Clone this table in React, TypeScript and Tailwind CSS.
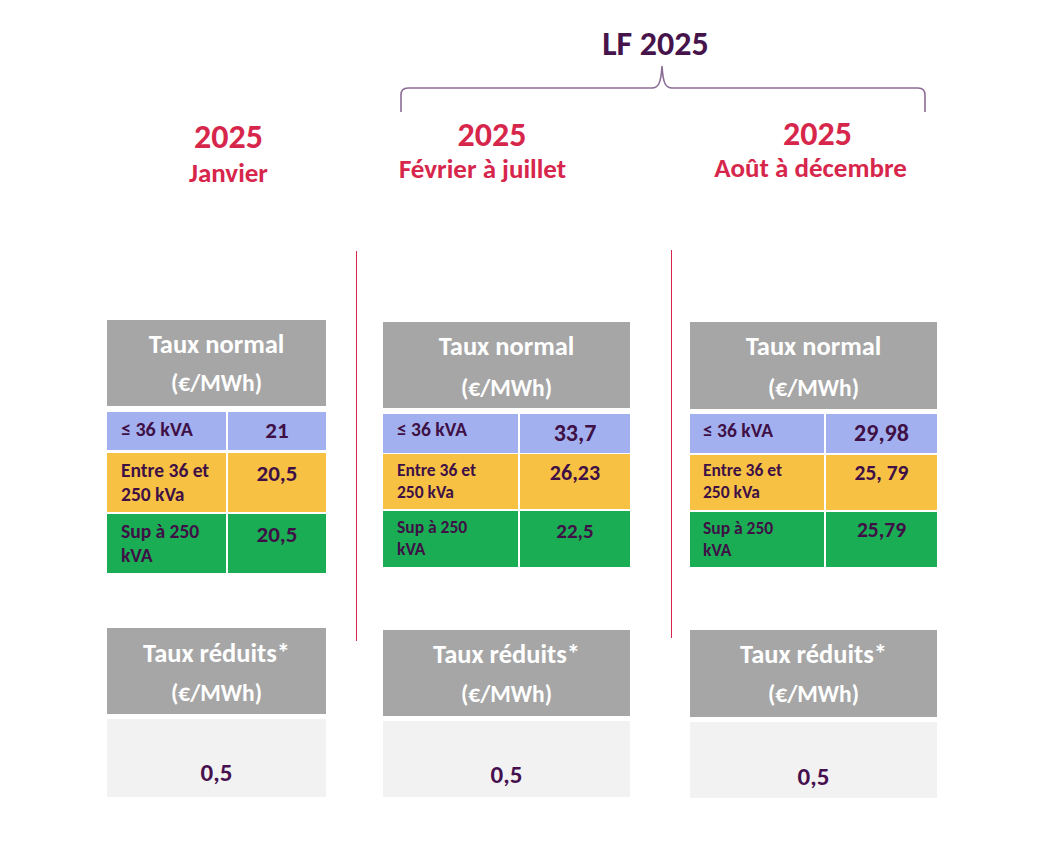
import React from "react";

const TXT = "text-[#3e1046]";

function GrayHead({ h, pt, l2, line1, line2 }: { h: string; pt: string; l2: string; line1: string; line2: string }) {
  return (
    <div className={`${h} ${pt} bg-[#a6a6a6] text-white font-bold text-center`}>
      <div className="text-[26.5px] leading-[38px]">{line1}</div>
      <div className={`text-[23.5px] ${l2}`}>{line2}</div>
    </div>
  );
}

export default function App() {
  return (
    <div className="w-[1040px] h-[866px] bg-white overflow-hidden font-[Carlito,Lato,sans-serif]">
      {/* LF 2025 + brace */}
      <div className="ml-[400px] w-[526px] pt-[27px]">
        <div className="text-[34px] leading-[34px] font-bold text-[#46144b] text-center pr-[15px]">LF 2025</div>
        <svg className="block mt-[3px]" width="526" height="50" viewBox="0 0 526 50" fill="none">
          <path
            d="M1,48 L1,31 Q1,24 8,24 L252,24 C258,24 261,20 262,2 C263,20 266,24 272,24 L518,24 Q525,24 525,31 L525,48"
            stroke="#8c6c95"
            strokeWidth="1.6"
          />
        </svg>
      </div>

      {/* Column headers */}
      <div className="h-[86px] flex items-start pl-[107px] text-[#d7264b] font-bold">
        <div className="w-[219px] text-center pl-[24px] mt-[5px]">
          <div className="text-[34px] leading-[36px]">2025</div>
          <div className="text-[27px] leading-[36px]">Janvier</div>
        </div>
        <div className="w-[57px]" />
        <div className="w-[247px] text-center mt-[3px]">
          <div className="text-[34px] leading-[36px] pr-[29px]">2025</div>
          <div className="text-[27px] leading-[32px] pr-[48px]">Février à juillet</div>
        </div>
        <div className="w-[60px]" />
        <div className="w-[247px] text-center mt-[2px]">
          <div className="text-[34px] leading-[36px] pl-[8px]">2025</div>
          <div className="text-[27px] leading-[31px] pr-[6px]">Août à décembre</div>
        </div>
      </div>

      {/* Body */}
      <div className={`flex items-start pl-[107px] font-bold ${TXT}`}>
        {/* Column 1 */}
        <div className="w-[219px] mt-[120px] flex flex-col">
          <GrayHead h="h-[86px]" pt="pt-[5px]" l2="leading-[40px]" line1="Taux normal" line2="(€/MWh)" />
          <div className="mt-[6px] h-[38px] flex gap-[2px]">
            <div className="w-[119px] bg-[#a3b0ef] pl-[14px] pt-[5px] text-[20px] leading-[24px]">≤ 36 kVA</div>
            <div className="flex-1 bg-[#a3b0ef] text-center pt-[4px] text-[23px] leading-[28px]">21</div>
          </div>
          <div className="mt-[3px] h-[59px] flex gap-[2px]">
            <div className="w-[119px] bg-[#f7c244] pl-[14px] pt-[5px] text-[19.5px] leading-[24px]">
              Entre 36 et
              <br />
              250 kVa
            </div>
            <div className="flex-1 bg-[#f7c244] text-center pt-[6px] text-[23px] leading-[28px]">20,5</div>
          </div>
          <div className="mt-[2px] h-[59px] flex gap-[2px]">
            <div className="w-[119px] bg-[#1aad54] pl-[14px] pt-[5px] text-[19.5px] leading-[24px]">
              Sup à 250
              <br />
              kVA
            </div>
            <div className="flex-1 bg-[#1aad54] text-center pt-[6px] text-[23px] leading-[28px]">20,5</div>
          </div>
          <div className="mt-[55px]">
            <GrayHead h="h-[86px]" pt="pt-[6px]" l2="leading-[43px]" line1="Taux réduits*" line2="(€/MWh)" />
          </div>
          <div className="mt-[5px] h-[78px] bg-[#f2f2f2] text-center pt-[39px] text-[25px] leading-[30px] text-[#46104f]">0,5</div>
        </div>

        {/* Separator 1 */}
        <div className="ml-[30px] mt-[51px] w-px h-[390px] bg-[#d7264b]" />

        {/* Column 2 */}
        <div className="ml-[26px] w-[247px] mt-[122px] flex flex-col">
          <GrayHead h="h-[86px]" pt="pt-[5px]" l2="leading-[46px]" line1="Taux normal" line2="(€/MWh)" />
          <div className="mt-[6px] h-[39px] flex gap-[2px]">
            <div className="w-[135px] bg-[#a3b0ef] pl-[14px] pt-[4px] text-[19.5px] leading-[22px]">≤ 36 kVA</div>
            <div className="flex-1 bg-[#a3b0ef] text-center pt-[5px] text-[24px] leading-[28px]">33,7</div>
          </div>
          <div className="mt-[1px] h-[55px] flex gap-[2px]">
            <div className="w-[135px] bg-[#f7c244] pl-[14px] pt-[5px] text-[17.5px] leading-[22px]">
              Entre 36 et
              <br />
              250 kVa
            </div>
            <div className="flex-1 bg-[#f7c244] text-center pt-[5px] text-[22px] leading-[28px]">26,23</div>
          </div>
          <div className="mt-[2px] h-[56px] flex gap-[2px]">
            <div className="w-[135px] bg-[#1aad54] pl-[14px] pt-[5px] text-[17.5px] leading-[22px]">
              Sup à 250
              <br />
              kVA
            </div>
            <div className="flex-1 bg-[#1aad54] text-center pt-[6px] text-[21px] leading-[28px]">22,5</div>
          </div>
          <div className="mt-[63px]">
            <GrayHead h="h-[86px]" pt="pt-[5px]" l2="leading-[43px]" line1="Taux réduits*" line2="(€/MWh)" />
          </div>
          <div className="mt-[5px] h-[76px] bg-[#f2f2f2] text-center pt-[39px] text-[25px] leading-[30px] text-[#46104f]">0,5</div>
        </div>

        {/* Separator 2 */}
        <div className="ml-[41px] mt-[50px] w-px h-[388px] bg-[#d7264b]" />

        {/* Column 3 */}
        <div className="ml-[18px] w-[247px] mt-[122px] flex flex-col">
          <GrayHead h="h-[87px]" pt="pt-[5px]" l2="leading-[46px]" line1="Taux normal" line2="(€/MWh)" />
          <div className="mt-[5px] h-[39px] flex gap-[2px]">
            <div className="w-[134px] bg-[#a3b0ef] pl-[13px] pt-[5px] text-[19.5px] leading-[22px]">≤ 36 kVA</div>
            <div className="flex-1 bg-[#a3b0ef] text-center pt-[5px] text-[24px] leading-[28px]">29,98</div>
          </div>
          <div className="mt-[2px] h-[55px] flex gap-[2px]">
            <div className="w-[134px] bg-[#f7c244] pl-[13px] pt-[4px] text-[17.5px] leading-[22px]">
              Entre 36 et
              <br />
              250 kVa
            </div>
            <div className="flex-1 bg-[#f7c244] text-center pt-[4px] text-[21.5px] leading-[28px]">25, 79</div>
          </div>
          <div className="mt-[2px] h-[55px] flex gap-[2px]">
            <div className="w-[134px] bg-[#1aad54] pl-[13px] pt-[5px] text-[17.5px] leading-[22px]">
              Sup à 250
              <br />
              kVA
            </div>
            <div className="flex-1 bg-[#1aad54] text-center pt-[4px] text-[21.5px] leading-[28px]">25,79</div>
          </div>
          <div className="mt-[63px]">
            <GrayHead h="h-[87px]" pt="pt-[5px]" l2="leading-[43px]" line1="Taux réduits*" line2="(€/MWh)" />
          </div>
          <div className="mt-[5px] h-[76px] bg-[#f2f2f2] text-center pt-[40px] text-[25px] leading-[30px] text-[#46104f]">0,5</div>
        </div>
      </div>
    </div>
  );
}
